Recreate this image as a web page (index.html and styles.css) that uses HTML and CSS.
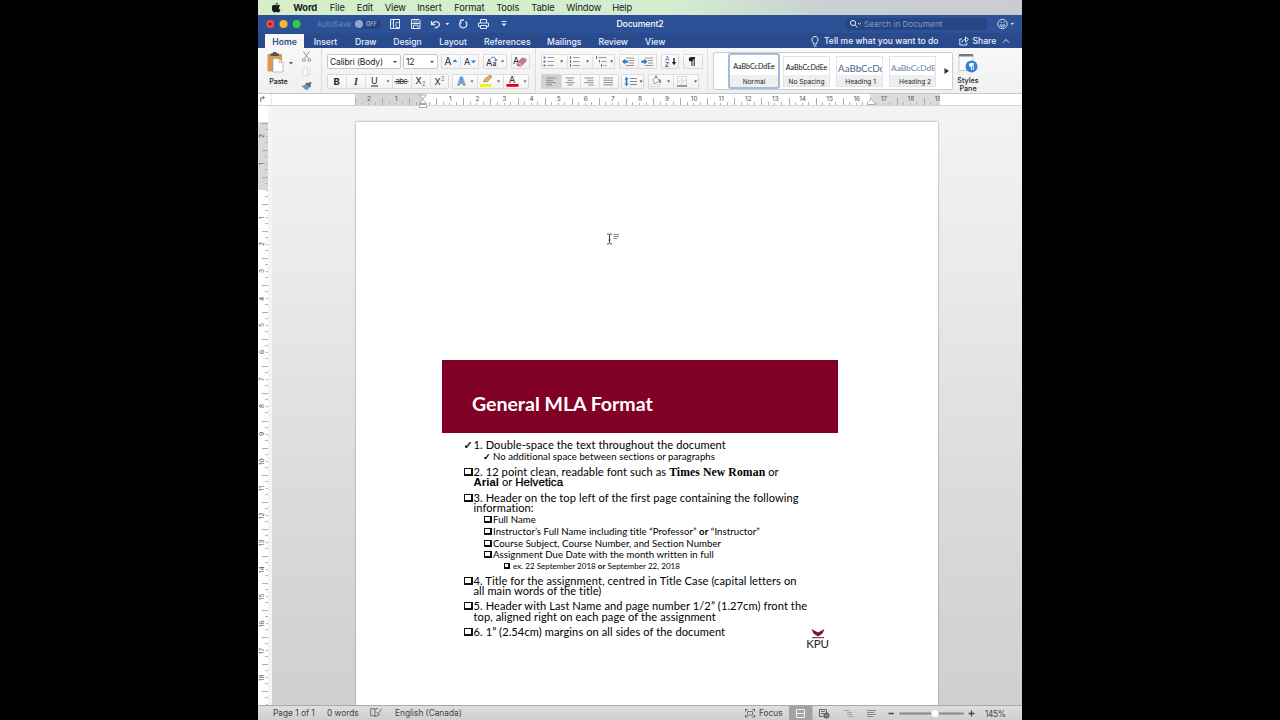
FILE: index.html
```
<!DOCTYPE html>
<html lang="en">
<head>
<meta charset="utf-8">
<title>Document2</title>
<link rel="stylesheet" href="styles.css">
</head>
<body>
<div class="window">
  <nav class="menubar">
    <svg width="10" height="11" viewBox="1 0 20 22"><path fill="#15201a" d="M13 1c.2 2-1.500 4.300-4 4.400C8.800 3.400 10.800 1.300 13 1zM9.700 6.800c1 0 2-1.200 4-1.200 1.700 0 3.300.9 4 2.200-3.500 2-3 6.800.7 8.200C17.600 18.500 16 21 14 21c-1.500 0-2-.9-3.800-.9S7.800 21 6.500 21C3.500 21 1 15.500 1 11.700c0-4 2.500-6 5-6 1.500 0 2.700 1.100 3.700 1.100z"/></svg>
    <b>Word</b><span>File</span><span>Edit</span><span>View</span><span>Insert</span><span>Format</span><span>Tools</span><span>Table</span><span>Window</span><span>Help</span>
  </nav>

  <header class="titlebar">
    <svg class="lights" width="44" height="18" viewBox="264 15 44 18"><circle cx="270.300" cy="24" r="4" fill="#f9464e"/><circle cx="270.300" cy="24" r="1.200" fill="#7c0c18"/><circle cx="283.500" cy="24" r="4" fill="#f8b432"/><circle cx="296.600" cy="24" r="4" fill="#2dce48"/></svg>
    <span class="autosave">AutoSave</span>
    <span class="toggle"><i></i>OFF</span>
    <svg class="quick" width="130" height="18" viewBox="386 15 130 18" fill="none" stroke="#dfe7f5" stroke-width="1">
      <path d="M390.500 19.500h9v9h-9zM393.500 19.500v9"/><path d="M391.500 22h1M391.500 24h1" stroke-width=".7"/><path d="M396 22.500h2.500l1 1v4h-3.500z" stroke-width=".8"/>
      <path d="M411.500 19.500h7.500l1 1v8h-8.500zM413.500 28.500v-3.300h4.500v3.300"/><path fill="#dfe7f5" stroke="none" d="M413 20h5.500v3H413z" opacity=".35"/><path d="M411.500 23.500h8.500"/>
      <path d="M431.500 21v3.700h3.700M431.700 24.500c2-2.700 4.500-3.500 6.500-2.200 2 1.500 1.600 3.600-.4 4.600l-3 1.300" stroke-width="1.300"/><path d="M445.500 23h3.800l-1.900 2.300z" fill="#dfe7f5" stroke="none"/>
      <path d="M465.500 21.500a3.600 3.600 0 1 1-4.800.2M464 20l-3.500.3.300 3.300" stroke-width="1.300"/>
      <path d="M480.500 23v-3.500h6V23M480.500 26.500h-2V23h10v3.500h-2M480.500 25.500h6v3h-6z"/>
      <path d="M501.500 21.500h5"/><path d="M501.500 23.500h5l-2.500 2.800z" fill="#dfe7f5" stroke="none"/>
    </svg>
    <span class="doc-title">Document2</span>
    <div class="search"><svg width="14" height="12" viewBox="0 0 14 12" fill="none" stroke="#dfe7f5"><circle cx="5" cy="5" r="2.600"/><path d="M7 7l2.500 2.500M10 5l1.400 1.400L12.800 5"/></svg><span>Search in Document</span></div>
    <svg class="smile" width="22" height="18" viewBox="996 15 22 18" fill="none" stroke="#dfe7f5" stroke-width=".9"><circle cx="1002.500" cy="24" r="4.700"/><path d="M1000 25c.5 2.700 4.500 2.700 5 0zM1001 21.500v1.500M1004 21.500v1.500"/><path d="M1010.500 23h3.600l-1.800 2z" fill="#dfe7f5" stroke="none"/></svg>
  </header>

  <nav class="tabs">
    <span class="active">Home</span><span>Insert</span><span>Draw</span><span>Design</span><span>Layout</span><span>References</span><span>Mailings</span><span>Review</span><span>View</span>
    <div class="tell"><svg width="10" height="13" viewBox="0 0 10 13" fill="none" stroke="#dfe7f5"><path d="M3.500 9V7.800C1 6 1.500 1.500 5 1.500S9 6 6.500 7.800V9zM3.500 11h3"/></svg><span>Tell me what you want to do</span></div>
    <div class="share"><svg width="10" height="10" viewBox="0 0 10 10" fill="none" stroke="#dfe7f5"><path d="M3 3H.8v6h7V6.800M3 6.500c.3-2.500 2-3 4-3M6.500 1l3 2.500L6.500 6z"/></svg><span>Share</span><svg width="8" height="8" viewBox="0 0 8 8" fill="none" stroke="#dfe7f5"><path d="M1 5.500l3-3 3 3"/></svg></div>
  </nav>

  <section class="ribbon">
    <div class="clipboard">
      <svg width="58" height="46" viewBox="260 48 58 46">
        <rect x="267.500" y="54" width="14.500" height="17.500" rx="1" fill="#d89a4e"/><path d="M270.500 56h8.500v-2.500h-2l-.8-1.500h-3l-.8 1.500h-1.900z" fill="#555"/>
        <path d="M273 58.500h6l4 4v9.500h-10z" fill="#fff" stroke="#999" stroke-width=".6"/><path d="M279 58.500v4h4" fill="none" stroke="#999" stroke-width=".6"/>
        <path d="M289 62h4l-2 2.400z" fill="#555"/>
        <g fill="none" stroke="#8b9299" stroke-width="1"><path d="M303.500 51.500l5 7M309.500 51.500l-5 7"/><circle cx="303.700" cy="60" r="1.400" stroke="#7197bd"/><circle cx="309.300" cy="60" r="1.400" stroke="#7197bd"/></g>
        <path d="M302.500 68.500h5v7h-5zM304.500 66.500h3.500l2 2v5.500h-3" fill="#fafafa" stroke="#d0d0d0" stroke-width=".8"/>
        <path d="M301.500 86l5 4.500 3.500-3.500-4-2.500z" fill="#6c94bb"/><path d="M305 84l5 3.500 1.200-2-1-1 1.500-1.500-1.200-1.200-2 1.200-1.500-.5z" fill="#666"/>
        <text x="269.300" y="83.700" class="tiny" textLength="18.500">Paste</text>
      </svg>
    </div>

    <div class="font-tools">
      <div class="row">
        <div class="field name"><span>Calibri (Body)</span><i></i></div>
        <div class="field size"><span>12</span><i></i></div>
        <svg class="btn g1" width="38" height="15" viewBox="441 54 38 15"><path class="sep" d="M460.500 54v15"/><text x="444.500" y="65" class="glyph" font-size="10">A</text><path d="M452.500 62h5l-2.500-2.800z" fill="#2878c8"/><text x="464" y="65" class="glyph" font-size="9">A</text><path d="M471 60.500h5l-2.500 2.800z" fill="#2878c8"/></svg>
        <svg class="btn g2" width="24" height="15" viewBox="483 54 24 15"><text x="486" y="65.500" class="glyph" font-size="9">A</text><text x="492.500" y="65.500" class="glyph" font-size="7">a</text><path d="M490.500 58.500c2-2 4.800-1.500 5.300 1" fill="none" stroke="#2878c8" stroke-width="1"/><path d="M494 59.500h3.800l-1.900 2.300z" fill="#2878c8"/><path d="M501 60.500h3.200l-1.600 2z" fill="#555"/></svg>
        <svg class="btn g2" width="19" height="15" viewBox="511 54 19 15"><text x="513" y="63.500" class="glyph" font-size="9">A</text><path d="M517 63l5-5 4 1-.3 2.500-5 5-3.500-1z" fill="#c7778e" stroke="#9c5068" stroke-width=".6"/><path d="M517 63l4 1-.5 2.500" fill="none" stroke="#f0c8d2" stroke-width=".8"/></svg>
      </div>
      <div class="row">
        <svg class="btn" width="122" height="15" viewBox="327 74 122 15">
          <path class="sep" d="M346.500 74v15M365.500 74v15M392.500 74v15M411.500 74v15M430.500 74v15"/>
          <text x="333.500" y="84.500" class="glyph" font-weight="700" font-size="9.500">B</text>
          <text x="354" y="84.500" font-family="Liberation Serif, serif" font-style="italic" font-weight="700" font-size="10" fill="#333">I</text>
          <text x="371" y="84" class="glyph" font-size="9">U</text><path d="M371 86h7" stroke="#222"/>
          <path d="M386.500 80.500h3.200l-1.600 2z" fill="#555"/>
          <text x="395.500" y="84" class="glyph" font-size="7.500" textLength="12">abc</text><path d="M394.500 81.500h14" stroke="#333" stroke-width=".9"/>
          <text x="415.500" y="84" class="glyph" font-size="9">X</text><text x="422" y="86" font-size="5.500" class="blue">2</text>
          <text x="434.500" y="85" class="glyph" font-size="9">X</text><text x="441" y="81" font-size="5.500" class="blue">2</text>
        </svg>
        <svg class="btn g3" width="77" height="15" viewBox="452 74 77 15">
          <path class="sep" d="M477.500 74v15M503.500 74v15"/>
          <text x="457.500" y="85" font-family="Inter, sans-serif" font-size="10.500" font-weight="600" fill="#e5f1fc" stroke="#4384c8" stroke-width=".8">A</text><path d="M470.500 80.500h3l-1.500 2z" fill="#555"/>
          <path d="M483.500 82l1.500-3 5-4 2 2-4.500 4.500z" fill="#e8b256" stroke="#776" stroke-width=".6"/><path d="M480 84h11.500v2.800H480z" fill="#f8f000"/><path d="M497 80.500h3.200l-1.600 2z" fill="#555"/>
          <text x="509" y="83" class="glyph" font-size="9">A</text><path d="M506.500 84h12v2.800h-12z" fill="#e00010"/><path d="M523.500 80.500h3.200l-1.600 2z" fill="#555"/>
        </svg>
      </div>
    </div>

    <div class="para-tools">
      <div class="row">
        <svg class="btn" width="74" height="15" viewBox="541 54 74 15">
          <path class="sep" d="M567.500 54v15M592.500 54v15"/>
          <g fill="#2878c8"><circle cx="544.500" cy="57.500" r="1.100"/><circle cx="544.500" cy="61.500" r="1.100"/><circle cx="544.500" cy="65.500" r="1.100"/><path d="M570 56h1v3h-1zM570 60h1v3h-1zM570 64h1v3h-1zM596 56h1v3h-1zM599 60h1v2.500h-1zM601 64h1v3h-1z"/></g>
          <path d="M547.500 57.500h6.500M547.500 61.500h6.500M547.500 65.500h6.500M573 57.500h6.500M573 61.500h6.500M573 65.500h6.500M598.500 57.500h8M601.500 61.500h5M603.500 65.500h3" stroke="#999"/>
          <path d="M560 60.500h3.200l-1.600 2zM586 60.500h3.200l-1.600 2zM610 60.500h3.200l-1.600 2z" fill="#444"/>
        </svg>
        <svg class="btn g4" width="38" height="15" viewBox="619 54 38 15">
          <path class="sep" d="M638.500 54v15"/>
          <path d="M626 58h8M629 60.500h5M629 63h5M626 65.500h8M645 58h8M648 60.500h5M648 63h5M645 65.500h8" stroke="#888" stroke-width=".9"/>
          <path d="M622 61.600l3.200-2.800v1.700h3v2.200h-3v1.700zM647.500 61.600l-3.200-2.800v1.700h-3v2.200h3v1.700z" fill="#2878c8"/>
        </svg>
        <svg class="btn g2" width="18" height="15" viewBox="661 54 18 15"><text x="665" y="61" class="blue" font-size="6.500">A</text><text x="665" y="67" class="glyph" font-size="6.500">Z</text><path d="M674 58v6" stroke="#222" stroke-width="1.400"/><path d="M671.800 62h4.400l-2.200 3.200z" fill="#222"/></svg>
        <svg class="btn g2" width="20" height="15" viewBox="683 54 20 15"><path d="M692 66V57M694.200 66V57" stroke="#222"/><path d="M695.500 57h-4.500a2.300 2.300 0 0 0 0 4.600h1z" fill="#222"/></svg>
      </div>
      <div class="row">
        <svg class="btn" width="78" height="15" viewBox="541 74 78 15">
          <path d="M541 74h20v15h-20z" fill="#d2d2d2"/><path class="sep" d="M561.500 74v15M580.500 74v15M599.500 74v15"/>
          <path d="M546 78h10M546 80.300h7M546 82.600h10M546 84.900h6M565.500 78h9M567.500 80.300h5M565.500 82.600h9M567.500 84.900h5M584.500 78h9M587.500 80.300h6M584.500 82.600h9M588.500 84.900h5M603.500 78h9.500M603.500 80.300h9.500M603.500 82.600h9.500M603.500 84.900h9.500" stroke="#858585" stroke-width=".9"/>
        </svg>
        <svg class="btn g3" width="23" height="15" viewBox="621 74 23 15"><path d="M630 78.500h7M630 81.500h7M630 84.500h7" stroke="#888"/><path d="M624.500 79.500l2-2.700 2 2.700h-1.200v4h1.200l-2 2.700-2-2.700h1.200v-4z" fill="#2878c8"/><path d="M639.500 80.500h3.200l-1.600 2z" fill="#444"/></svg>
        <svg class="btn g4" width="51" height="15" viewBox="648 74 51 15"><path class="sep" d="M673.500 74v15"/><path d="M652.500 79.500l4-2.500 3 4-5 2.500z" fill="#fff" stroke="#888" stroke-width=".8"/><path d="M656 78v-2.500M659 79.500c1.500.5 1.500 2 1 3.500" fill="none" stroke="#2878c8" stroke-width="1.300"/><path d="M651 84.500h9v2h-9z" fill="#fff" stroke="#bbb" stroke-width=".5"/><path d="M667 80.500h3.200l-1.600 2zM694 80.500h3.200l-1.600 2z" fill="#444"/><path d="M677 76.500h10M677 81h10M677.500 76.500v9M682 76.500v9M686.500 76.500v9" stroke="#aaa" stroke-width=".7" stroke-dasharray="1 1"/><path d="M677 86h10" stroke="#444"/></svg>
      </div>
    </div>

    <div class="gallery">
      <div class="style selected"><span>AaBbCcDdEe</span><b>Normal</b></div>
      <div class="style"><span>AaBbCcDdEe</span><b>No Spacing</b></div>
      <div class="style h1"><span>AaBbCcDc</span><b>Heading 1</b></div>
      <div class="style h2"><span>AaBbCcDdEe</span><b>Heading 2</b></div>
      <svg width="6" height="8" viewBox="0 0 6 8"><path d="M.5 1l4.500 3-4.500 3z" fill="#333"/></svg>
    </div>
    <div class="pane">
      <svg width="20" height="21" viewBox="0 0 20 21"><path d="M1 1.500h14v16H1z" fill="#fdfdfd" stroke="#bbb" stroke-width=".8"/><path d="M1 1h14v2.500H1z" fill="#777"/><circle cx="13.500" cy="13.500" r="6" fill="#3482d6"/><path d="M13.500 17v-7M15.300 17v-7" stroke="#fff" stroke-width=".9"/><path d="M16 10h-3a2 2 0 0 0 0 4h.5z" fill="#fff"/></svg>
      <span>Styles<br>Pane</span>
    </div>
  </section>

  <div class="hruler">
    <svg width="14" height="11" viewBox="0 0 14 11"><path d="M3 8V3.500h3.500M5 1.500l2 2-2 2" fill="none" stroke="#555" stroke-width=".9"/></svg>
    <div class="scale">
      <i>2</i><i>1</i><i></i><i>1</i><i>2</i><i>3</i><i>4</i><i>5</i><i>6</i><i>7</i><i>8</i><i>9</i><i>10</i><i>11</i><i>12</i><i>13</i><i>14</i><i>15</i><i>16</i><i>17</i><i>18</i><i>19</i>
      <svg class="mark-left" width="10" height="15" viewBox="0 0 10 15" fill="#fff" stroke="#999" stroke-width=".8"><path d="M1.500 1h7L5 5zM5 5.500l3.500 4h-7zM1.500 10.500h7v3h-7z"/></svg>
      <svg class="mark-right" width="10" height="8" viewBox="0 0 10 8" fill="#fff" stroke="#999" stroke-width=".8"><path d="M5 1l3.500 3.500v2h-7v-2z"/></svg>
    </div>
  </div>

  <main class="workspace">
    <div class="vruler">
      <i>2</i><i>1</i><i></i><i>1</i><i>2</i><i>3</i><i>4</i><i>5</i><i>6</i><i>7</i><i>8</i><i>9</i><i>10</i><i>11</i><i>12</i><i>13</i><i>14</i><i>15</i><i>16</i><i>17</i><i>18</i><i></i>
    </div>
    <div class="page">
      <svg class="cursor" width="14" height="12" viewBox="0 0 14 12" fill="none" stroke="#333" stroke-width=".9"><path d="M1 1c2 0 2.500.5 2.500 1.500v7c0 1-.5 1.500-2.500 1.500M6 1c-2 0-2.500.5-2.500 1.500v7c0 1 .5 1.500 2.500 1.500M2.500 7h2"/><path d="M7.500 1.500h5.500M7.500 3.500h5.500M7.500 5.500h3.500" stroke="#777"/></svg>
      <article class="slide">
        <h1>General MLA Format</h1>
        <div class="lines">
          <p class="l1 check">1. Double-space the text throughout the document</p>
          <p class="l2 check">No additional space between sections or paragraphs</p>
          <p class="l1 box">2. 12 point clean, readable font such as <b class="times">Times New Roman</b> or</p>
          <p class="l1"><b class="arial">Arial</b> or <span class="helv">Helvetica</span></p>
          <p class="l1 box">3. Header on the top left of the first page containing the following</p>
          <p class="l1">information:</p>
          <p class="l2 box">Full Name</p>
          <p class="l2 box">Instructor’s Full Name including title “Professor” <b>or</b> “Instructor”</p>
          <p class="l2 box">Course Subject, Course Number, and Section Number</p>
          <p class="l2 box">Assignment Due Date with the month written in full</p>
          <p class="l3 box">ex. 22 September 2018 <b>or</b> September 22, 2018</p>
          <p class="l1 box">4. Title for the assignment, centred in Title Case (capital letters on</p>
          <p class="l1">all main words of the title)</p>
          <p class="l1 box">5. Header with Last Name and page number 1/2” (1.27cm) front the</p>
          <p class="l1">top, aligned right on each page of the assignment</p>
          <p class="l1 box">6. 1” (2.54cm) margins on all sides of the document</p>
        </div>
        <div class="kpu"><svg width="14" height="10" viewBox="0 0 14 10"><path d="M.5 0L7 3.500 13.500 0l-2 4.500L7 7.500 2.500 4.500z" fill="#7c1430"/><path d="M1 8.700h12" stroke="#7c1430" stroke-width="1"/></svg><span>KPU</span></div>
      </article>
    </div>
  </main>

  <footer class="status">
    <span>Page 1 of 1</span><span>0 words</span>
    <svg width="20" height="14" viewBox="0 0 20 14" fill="none" stroke="#666" stroke-width=".9"><path d="M5 3L.7 2.500v7l4.300.5 4-.5V8M5 3v8M5 3l3-.5M6.500 6l1.800 2 3-5"/></svg>
    <span>English (Canada)</span>
    <svg class="focus" width="10" height="9" viewBox="0 0 10 9" fill="none" stroke="#555"><path d="M.5 2.500v-2h2M7.500.5h2v2M9.500 6v2h-2M2.500 8h-2V6"/><path d="M2.500 2.500h5v3.700h-5z" stroke-width=".7"/></svg>
    <span class="focus-label">Focus</span>
    <svg width="217" height="15" viewBox="789 705 217 15" fill="none" stroke="#666">
      <path d="M789 705h23.500v15H789z" fill="#a2a2a2" stroke="none"/>
      <path d="M796.500 708.500h8v8h-8zM796.500 712.500h8" stroke="#f5f5f5"/>
      <path d="M819.500 708.500h7v4M819.500 708.500v7h4M821 710.500h4M821 712.500h3"/><circle cx="826.500" cy="714.500" r="2.500" fill="#888" stroke="#444"/>
      <path d="M844 709.500h5M847 711.500h5M847 713.500h5M849 715.500h4" stroke="#a0a0a0"/>
      <path d="M867 709.500h9M867 711.500h7M867 713.500h9M867 715.500h6" stroke="#888"/>
      <path d="M888.500 712.500h5.500M968.500 712.500h6M971.500 709.500v6" stroke="#444" stroke-width="1.300"/>
      <path d="M900 712.500h63" stroke="#888" stroke-width="2" stroke-linecap="round"/><circle cx="935" cy="712.500" r="3.700" fill="#fff" stroke="#ccc" stroke-width=".4"/>
      <text x="985" y="715.600" class="zoom" textLength="21">145%</text>
    </svg>
  </footer>
</div>
</body>
</html>
```
FILE: styles.css
```
* { box-sizing: border-box; }
body { margin: 0; background: #000; height: 720px; overflow: hidden; font-family: Inter, "Liberation Sans", sans-serif; }
svg { display: block; flex: none; }
i { font-style: normal; }
.window { width: 764px; height: 720px; margin-left: 258px; display: flex; flex-direction: column; background: #f3f3f3; }

.menubar { height: 15px; padding-left: 13.500px; display: grid; grid-template-columns: 22px 36.500px 27px 28px 32.500px 37px 42px 35px 35px 46px auto; align-items: center; font-size: 9.300px; letter-spacing: -.1px; line-height: 14px; color: #17201a; background: linear-gradient(90deg, #d6efc9, #d3ecd0 55%, #c8cfd2 75%, #cbccd3); white-space: nowrap; }
.menubar > * { transform: translateX(-.3px); }

.titlebar { height: 18px; padding-left: 6px; display: flex; align-items: center; background: #2d5196; color: #fff; white-space: nowrap; }
.autosave { width: 47px; padding-left: 9px; font-size: 7.600px; color: #6d87ba; }
.toggle { width: 26px; height: 9px; border-radius: 5px; background: #26447f; display: flex; align-items: center; gap: 3px; font-size: 5.500px; color: #a6b6d6; font-weight: 600; }
.toggle i { width: 8px; height: 8px; border-radius: 50%; background: #92a6cd; }
.quick { margin-left: 5px; }
.doc-title { width: 50px; margin-left: 99px; text-align: center; font-size: 8.700px; font-weight: 500; letter-spacing: -.1px; }
.search { margin-left: 181px; width: 141px; height: 12px; border-radius: 2px; background: #264582; display: flex; align-items: center; padding-left: 2px; gap: 2px; font-size: 8.200px; color: #8299c8; }
.smile { margin-left: 9px; }

.tabs { height: 15px; display: grid; padding-left: 7px; grid-template-columns: 39px 43px 37.500px 46px 45px 63.500px 50.500px 47.500px 36.500px 265px auto; align-items: center; background: #294b8e; color: #e9eefa; font-size: 8.600px; font-weight: 500; white-space: nowrap; }
.tabs > span { text-align: center; line-height: 16px; height: 15px; }
.tabs .active { background: #f7f7f7; color: #2b4c8c; font-weight: 600; }
.tell { display: flex; align-items: center; justify-content: flex-end; gap: 4px; line-height: 16px; }
.share { display: flex; align-items: center; gap: 4px; padding-left: 20px; line-height: 16px; }
.share svg:last-child { margin-left: 2px; }

.ribbon { height: 46px; display: flex; background: linear-gradient(#f8f8f8, #f0f0f0); border-bottom: 1px solid #c9c9c9; }
.clipboard { width: 64px; padding-left: 2px; border-right: 1px solid #ddd; }
.tiny { font: 500 7.300px Inter, sans-serif; fill: #222; }
.font-tools, .para-tools { display: flex; flex-direction: column; gap: 5px; padding-top: 6px; }
.font-tools { width: 214px; padding-left: 5px; border-right: 1px solid #ddd; }
.para-tools { width: 172px; padding-left: 5px; border-right: 1px solid #e2e2e2; }
.row { display: flex; height: 15px; }
.field { height: 15px; border: 1px solid #c6c6c6; border-radius: 2px; background: #fff; display: flex; align-items: center; justify-content: space-between; padding: 0 3px 0 2px; font-size: 8.500px; line-height: 12px; letter-spacing: -.15px; color: #222; white-space: nowrap; }
.field i { border: 2px solid transparent; border-top-color: #444; border-bottom: 0; }
.name { width: 74px; }
.size { width: 35px; margin-left: 2px; }
.btn { border-radius: 2px; background: linear-gradient(#fdfdfd, #f1f1f1); box-shadow: inset 0 0 0 .8px #d2d2d2; }
.g1, .g3 { margin-left: 3px; }
.para-tools .g3 { margin-left: 2px; }
.g2, .g4 { margin-left: 4px; }
.sep { stroke: #dedede; fill: none; }
.glyph { font-family: Inter, sans-serif; fill: #222; }
.blue { font-family: Inter, sans-serif; fill: #2878c8; }

.gallery { width: 240px; height: 38px; margin: 4px 0 0 5px; padding-left: 15px; border: 1px solid #ccc; border-radius: 2px; background: #fff; display: flex; align-items: center; }
.style { width: 47px; height: 31px; margin-right: 6px; border: 1px solid #e4e4e4; background: linear-gradient(#fff 62%, #efefef 62%); display: grid; grid-template-rows: 20px 9px; text-align: center; overflow: hidden; white-space: nowrap; }
.style span { font: 7.100px/22px Lato, sans-serif; color: #111; justify-self: center; }
.style b { font-size: 6.600px; font-weight: 400; line-height: 11px; color: #222; }
.style.selected { width: 52px; height: 36px; margin: 0 3px 0 -1px; border: 2px solid #a3bbdd; border-radius: 3px; grid-template-rows: 22px 10px; }
.style.selected span { line-height: 23px; }
.style.h1 span { font-size: 9.800px; color: #4a6591; justify-self: start; padding-left: 1px; }
.style.h2 span { font-size: 8.400px; color: #6b80a8; justify-self: start; padding-left: 1px; }
.gallery svg { margin-left: 2px; }
.pane { width: 30px; display: flex; flex-direction: column; align-items: center; padding-top: 5px; font-size: 7.200px; font-weight: 500; line-height: 7.700px; text-align: center; color: #222; }
.pane svg { margin-bottom: 3px; }

.hruler { height: 12px; display: flex; background: #fff; border-bottom: 1px solid #d4d4d4; }
.hruler > svg { border-right: 1px solid #e8e8e8; }
.scale { width: 585px; margin-left: 83px; height: 11px; display: grid; grid-template-columns: repeat(22, 27.100px); position: relative; clip-path: inset(0 0 -5px 0); background: linear-gradient(90deg, #d6d6d6 68px, #fff 68px 515px, #dcdcdc 515px); }
.scale i { height: 11px; font-size: 6.500px; line-height: 11px; color: #555; text-align: center; text-indent: 1px; background: linear-gradient(#aaa, #aaa) 0 100%/1px 7px no-repeat, linear-gradient(#b5b5b5, #b5b5b5) 25% 100%/1px 3px no-repeat, linear-gradient(#b5b5b5, #b5b5b5) 50% 100%/1px 2px no-repeat, linear-gradient(#b5b5b5, #b5b5b5) 75% 100%/1px 3px no-repeat; }
.mark-left { position: absolute; left: 63px; top: 0; }
.mark-right { position: absolute; left: 511px; top: 4px; }

.workspace { height: 599px; display: flex; background: linear-gradient(#f3f3f3, #ebebeb 25%, #dcdcdc 62%, #d2d2d2 90%, #d0d0d0); overflow: hidden; }
.vruler { width: 14px; padding-top: 16.500px; background: linear-gradient(90deg, transparent 10px, #f4f4f4 10px), linear-gradient(#fff 16px, #d8d8d8 16px 84.500px, #fff 84.500px); display: grid; grid-auto-rows: 27.100px; }
.vruler i { width: 10px; font-size: 6.500px; line-height: 8px; color: #555; writing-mode: vertical-rl; transform: rotate(180deg); text-align: center; background: linear-gradient(#aaa, #aaa) 0 100%/6px 1px no-repeat, linear-gradient(#b5b5b5, #b5b5b5) 0 25%/3px 1px no-repeat, linear-gradient(#b5b5b5, #b5b5b5) 0 50%/2px 1px no-repeat, linear-gradient(#b5b5b5, #b5b5b5) 0 75%/3px 1px no-repeat; }
.page { width: 582px; height: 600px; margin: 16px 0 0 84px; background: #fff; box-shadow: 0 0 2px #888; position: relative; }
.cursor { position: absolute; left: 250px; top: 111px; }

.slide { margin: 238px 0 0 86px; width: 396px; height: 300px; display: grid; grid-template-rows: 73px 1fr; color: #000; font-family: Lato, sans-serif; position: relative; }
.slide h1 { margin: 0; padding: 32px 0 0 30px; background: #800026; color: #fff; font-size: 19.500px; line-height: 24px; }
.lines { padding-top: 6.500px; display: grid; grid-template-rows: 12.500px 14.500px 10.500px 15.500px 10.500px 12px 11.500px 12px 11px 11px 15px 10px 15px 11px 15px 10px; white-space: nowrap; }
.lines p { margin: 0; line-height: 10px; height: 10px; white-space: pre; }
.l1 { padding-left: 31.500px; font-size: 11.100px; letter-spacing: .08px; }
.l2 { padding-left: 51px; font-size: 9.600px; letter-spacing: .06px; }
.l3 { padding-left: 71px; font-size: 8px; letter-spacing: .03px; }
.box::before { content: ""; box-sizing: border-box; display: inline-block; width: 9px; height: 8px; margin: 0 1px -.5px -10px; border: 1px solid #111; border-width: 1px 2px 2px 1px; }
.l2.box::before { width: 8px; height: 7px; margin: 0 1px 0 -9px; }
.l3.box::before { width: 6px; height: 6px; margin: 0 3px 0 -9px; }
.check::before { content: "✓"; display: inline-block; width: 10px; margin-left: -10px; font: 700 11px/10px "DejaVu Sans", sans-serif; -webkit-text-stroke: .4px #000; }
.l2.check::before { font-size: 9px; }
.times { font-family: "Liberation Serif", serif; font-size: 11.700px; letter-spacing: .1px; }
.arial { font-family: "Liberation Sans", sans-serif; font-size: 11.300px; }
.helv { font-family: "Liberation Sans", sans-serif; font-size: 11.500px; -webkit-text-stroke: .3px #000; }
.kpu { position: absolute; left: 363px; top: 269px; display: flex; flex-direction: column; align-items: center; width: 25px; font-size: 11.500px; line-height: 10px; letter-spacing: -.2px; color: #222; }

.status { height: 15px; display: flex; align-items: center; background: linear-gradient(#dedede, #cfcfcf); border-top: 1px solid #aaa; font-size: 8.300px; color: #444; white-space: nowrap; padding-left: 15px; }
.status span:nth-child(1) { width: 54px; }
.status span:nth-child(2) { width: 43px; }
.status > span:nth-of-type(3) { width: 350px; margin-left: 5px; }
.status .focus-label { width: 30px; margin-left: 4px; }
.zoom { font: 8.300px Inter, sans-serif; fill: #444; stroke: none; }
```
